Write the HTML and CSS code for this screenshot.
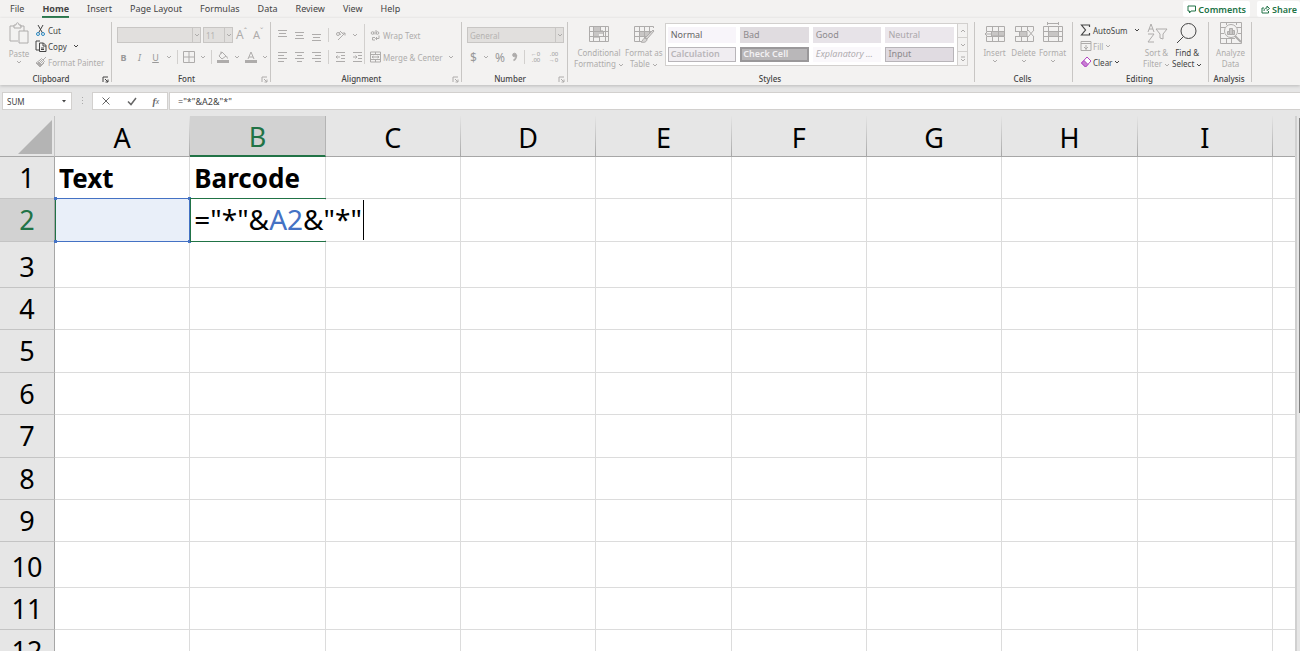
FILE: index.html
```html
<!DOCTYPE html>
<html lang="en">
<head>
    <meta charset="UTF-8">
    <meta name="viewport" content="width=device-width, initial-scale=1.0">
    <title>Barcode Workbook</title>
    <link rel="stylesheet" href="styles.css">
</head>
<body>
    <!-- Shared icons -->
    <svg class="sprite" aria-hidden="true">
        <symbol id="chev" viewBox="0 0 6 6"><path d="M1 2l2 2 2-2"/></symbol>
        <symbol id="launcher" viewBox="0 0 7 7"><path d="M1 6V1h5M3 3l3 3M6 3.500V6H3.500"/></symbol>
    </svg>

    <!-- Tabs -->
    <header class="tabs">
        <nav>
            <a href="#">File</a>
            <a href="#" class="active">Home</a>
            <a href="#">Insert</a>
            <a href="#">Page Layout</a>
            <a href="#">Formulas</a>
            <a href="#">Data</a>
            <a href="#">Review</a>
            <a href="#">View</a>
            <a href="#">Help</a>
        </nav>
        <div class="tab-actions">
            <button type="button"><svg width="9" height="9" viewBox="0 0 9 9"><path d="M1 1h7.500v5H4L2.500 8V6H1z"/></svg>Comments</button>
            <button type="button"><svg width="9" height="9" viewBox="0 0 9 9"><path d="M3 3H1v5h6.500V6M3 6c0-2 1-3 3-3V1l2.500 2.500L6 5.500V4.500"/></svg>Share</button>
        </div>
    </header>

    <!-- Ribbon -->
    <div class="ribbon">
        <section class="group clipboard">
            <div class="group-body">
                <button type="button" class="big off">
                    <svg width="22" height="23" viewBox="0 0 22 23"><path d="M6 4H2v15h8M16 9V4h-4M6 6V3h2c0-3 3-3 3 0h2v3zM11 9h9v12h-9z"/></svg>
                    <span>Paste</span>
                    <svg class="chev"><use href="#chev"/></svg>
                </button>
                <div class="stack">
                    <button type="button"><svg width="12" height="12" viewBox="0 0 12 12"><path d="M3 1l4.500 8M8 1L3.500 9"/><g stroke="#2b88c0"><circle cx="3" cy="10" r="1.500"/><circle cx="8" cy="10" r="1.500"/></g></svg>Cut</button>
                    <button type="button"><svg width="12" height="12" viewBox="0 0 12 12"><path d="M4 10H1V1h4M4.500 3h4l2.500 2.500V11.500H4.500zM8 3v3h3M6 8h3M6 9.500h3"/></svg>Copy<svg class="chev"><use href="#chev"/></svg></button>
                    <button type="button" class="off"><svg width="12" height="12" viewBox="0 0 12 12"><path d="M11 1L8 4M5 3l4 4M6.500 2.500l3 3-2 2-3-3zM5 4L1 7l4 4 4-4" /><path d="M3 7l2 2M2 8l3 3 2-2-3-3z" fill="currentColor"/></svg>Format Painter</button>
                </div>
            </div>
            <footer><h2>Clipboard</h2><svg width="7" height="7"><use href="#launcher"/></svg></footer>
        </section>

        <section class="group font off">
            <div class="group-body rows">
                <div class="row">
                    <span class="drop name"><select aria-label="Font" disabled><option></option></select><svg class="chev"><use href="#chev"/></svg></span>
                    <span class="drop size"><select aria-label="Font size" disabled><option>11</option></select><svg class="chev"><use href="#chev"/></svg></span>
                    <button type="button" class="letter grow" aria-label="Increase font size">A<sup>ˆ</sup></button>
                    <button type="button" class="letter" aria-label="Decrease font size">A<sup>ˇ</sup></button>
                </div>
                <div class="row">
                    <button type="button" class="glyph"><b>B</b></button>
                    <button type="button" class="glyph"><i>I</i></button>
                    <button type="button" class="glyph"><u>U</u></button>
                    <svg class="chev"><use href="#chev"/></svg>
                    <span class="sep"></span>
                    <button type="button" aria-label="Borders"><svg width="12" height="12" viewBox="0 0 12 12"><path d="M.5.5h11v11H.5zM6 1v10M1 6h10"/></svg></button>
                    <svg class="chev"><use href="#chev"/></svg>
                    <span class="sep"></span>
                    <button type="button" aria-label="Fill color"><svg width="12" height="12" viewBox="0 0 12 12"><path d="M5 1l4 4-4 3-3-3zM4 3V0.500M9.500 5l1 2.500"/><path d="M0 9h12v3H0z" fill="currentColor" stroke="none"/></svg></button>
                    <svg class="chev"><use href="#chev"/></svg>
                    <button type="button" aria-label="Font color"><svg width="12" height="12" viewBox="0 0 12 12"><path d="M3 8l3-7 3 7M4 6h4"/><path d="M0 9h12v3H0z" fill="currentColor" stroke="none"/></svg></button>
                    <svg class="chev"><use href="#chev"/></svg>
                </div>
            </div>
            <footer><h2>Font</h2><svg width="7" height="7"><use href="#launcher"/></svg></footer>
        </section>

        <section class="group alignment off">
            <div class="group-body split">
                <div class="rows">
                    <div class="row">
                        <button type="button" aria-label="Top align"><svg width="11" height="12" viewBox="0 0 11 12"><path d="M1 1.500h9M2 4.500h7M1 7.500h9"/></svg></button>
                        <button type="button" aria-label="Middle align"><svg width="11" height="12" viewBox="0 0 11 12"><path d="M1 3.500h9M2 6.500h7M1 9.500h9"/></svg></button>
                        <button type="button" aria-label="Bottom align"><svg width="11" height="12" viewBox="0 0 11 12"><path d="M1 5.500h9M2 8.500h7M1 11.500h9"/></svg></button>
                        <span class="sep"></span>
                        <button type="button" aria-label="Orientation"><svg width="11" height="12" viewBox="0 0 11 12"><circle cx="3" cy="5" r="1.500"/><path d="M4 3l1.500 3M5 2l3 3M3 11l7-7M7.500 4H10v2.500"/></svg></button>
                        <svg class="chev"><use href="#chev"/></svg>
                    </div>
                    <div class="row">
                        <button type="button" aria-label="Align left"><svg width="11" height="12" viewBox="0 0 11 12"><path d="M1 1.500h9M1 4.500h6M1 7.500h9M1 10.500h6"/></svg></button>
                        <button type="button" aria-label="Center"><svg width="11" height="12" viewBox="0 0 11 12"><path d="M1 1.500h9M3 4.500h5M1 7.500h9M3 10.500h5"/></svg></button>
                        <button type="button" aria-label="Align right"><svg width="11" height="12" viewBox="0 0 11 12"><path d="M1 1.500h9M4 4.500h6M1 7.500h9M4 10.500h6"/></svg></button>
                        <span class="sep"></span>
                        <button type="button" aria-label="Decrease indent"><svg width="11" height="12" viewBox="0 0 11 12"><path d="M1 1.500h9M6 4.500h4M6 7.500h4M1 10.500h9M5 6H1M2.500 4.500L1 6l1.500 1.500"/></svg></button>
                        <button type="button" aria-label="Increase indent"><svg width="11" height="12" viewBox="0 0 11 12"><path d="M1 1.500h9M6 4.500h4M6 7.500h4M1 10.500h9M1 6h4M3.500 4.500L5 6 3.500 7.500"/></svg></button>
                    </div>
                </div>
                <span class="sep tall-sep"></span>
                <div class="rows">
                    <div class="row"><button type="button" class="wide"><svg width="11" height="12" viewBox="0 0 11 12"><circle cx="2.500" cy="4" r="1.300"/><path d="M4 2.500v3M6 1v4.500M5 8.500H2.500v2.500H5M6 9.500h3v-3M7 8L5.500 9.500 7 11"/><circle cx="7.500" cy="4" r="1.300"/></svg>Wrap Text</button></div>
                    <div class="row"><button type="button" class="wide"><svg width="11" height="12" viewBox="0 0 11 12"><path d="M.5 1h10v10H.5zM.5 3.500h10M.5 8.500h10M5.500 1v2.500M5.500 8.500V11M2 6h7M3.500 5L2 6l1.500 1M7.500 5L9 6 7.500 7"/></svg>Merge &amp; Center<svg class="chev"><use href="#chev"/></svg></button></div>
                </div>
            </div>
            <footer><h2>Alignment</h2><svg width="7" height="7"><use href="#launcher"/></svg></footer>
        </section>

        <section class="group number off">
            <div class="group-body rows">
                <div class="row">
                    <span class="drop format"><select aria-label="Number format" disabled><option>General</option></select><svg class="chev"><use href="#chev"/></svg></span>
                </div>
                <div class="row">
                    <button type="button" class="sign">$</button>
                    <svg class="chev"><use href="#chev"/></svg>
                    <button type="button" class="sign">%</button>
                    <button type="button" aria-label="Comma style"><svg width="7" height="12" viewBox="0 0 7 12"><circle cx="3.500" cy="4" r="1.800" fill="currentColor"/><path d="M5.500 4c0 3-1 4.500-3 5.500" stroke-width="1.500"/></svg></button>
                    <span class="sep"></span>
                    <button type="button" class="decimals" aria-label="Increase decimal">←0<br>.00</button>
                    <button type="button" class="decimals" aria-label="Decrease decimal">.00<br>→0</button>
                </div>
            </div>
            <footer><h2>Number</h2><svg width="7" height="7"><use href="#launcher"/></svg></footer>
        </section>

        <section class="group styles">
            <div class="group-body">
                <button type="button" class="big off">
                    <svg width="22" height="22" viewBox="0 0 22 22"><path d="M5 4h7v4H5zM5 8h10v4H5zM5 12h6v4H5z" fill="#c8c6c5" stroke="none"/><path d="M1.500 4.500h19v15h-19zM1 9.500h20M1 14.500h20M5.500 4v15M12.500 4v5M15.500 9v5M11.500 14v5M17.500 4v15"/></svg>
                    <span>Conditional<br>Formatting <svg class="chev"><use href="#chev"/></svg></span>
                </button>
                <button type="button" class="big off">
                    <svg width="22" height="22" viewBox="0 0 22 22"><path d="M6 9h10v5H6z" fill="#c8c6c5" stroke="none"/><path d="M9 19.500H1.500v-15h19V6M1 9.500h18M1 14.500h12M6.500 4v15M11.500 4v13M16.500 4v7"/><path d="M21 9l-7 8-2-1 8-8zM12 16c-2 0-2 3-4 4 3 1 6 0 6-3z" fill="#d8d6d5"/></svg>
                    <span>Format as<br>Table <svg class="chev"><use href="#chev"/></svg></span>
                </button>
                <div class="gallery">
                    <div class="swatches">
                        <button type="button" class="normal">Normal</button>
                        <button type="button" class="bad">Bad</button>
                        <button type="button" class="good">Good</button>
                        <button type="button" class="neutral">Neutral</button>
                        <button type="button" class="calculation">Calculation</button>
                        <button type="button" class="check">Check Cell</button>
                        <button type="button" class="explanatory">Explanatory ...</button>
                        <button type="button" class="input">Input</button>
                    </div>
                    <div class="gallery-scroll">
                        <button type="button" aria-label="Previous styles"><svg class="chev" viewBox="0 0 6 6"><path d="M1 4l2-2 2 2"/></svg></button>
                        <button type="button" aria-label="Next styles"><svg class="chev"><use href="#chev"/></svg></button>
                        <button type="button" aria-label="More styles"><svg class="chev" viewBox="0 0 6 6"><path d="M1 1h4M1 3l2 2 2-2"/></svg></button>
                    </div>
                </div>
            </div>
            <footer><h2>Styles</h2></footer>
        </section>

        <section class="group cells off">
            <div class="group-body">
                <button type="button" class="big">
                    <svg width="22" height="22" viewBox="0 0 22 22"><path d="M7 9h14v5H7z" fill="#c8c6c5" stroke="none"/><path d="M2.500 4.500h18v5h-18zM2.500 14.500h18v5h-18zM8.500 4v5M14.500 4v5M8.500 14v5M14.500 14v5M7.500 9v5h13V9M14.500 9v5M7 12H1M3.500 9.500L1 12l2.500 2.500"/></svg>
                    <span>Insert</span>
                    <svg class="chev"><use href="#chev"/></svg>
                </button>
                <button type="button" class="big">
                    <svg width="22" height="22" viewBox="0 0 22 22"><path d="M6 9h8v5H6z" fill="#c8c6c5" stroke="none"/><path d="M2.500 9V4.500h18V8M2.500 14v5.500h18V15M8.500 4v5M14.500 4v5M8.500 14v5M14.500 14v5M2 9.500h12v5H2M6.500 9v5M15 8l6 7M21 8l-6 7"/></svg>
                    <span>Delete</span>
                    <svg class="chev"><use href="#chev"/></svg>
                </button>
                <button type="button" class="big">
                    <svg width="22" height="22" viewBox="0 0 22 22"><path d="M6 9h10v5H6z" fill="#c8c6c5" stroke="none"/><path d="M1.500 4.500h19v15h-19zM2 9.500h18M2 14.500h18M6.500 4v15M16.500 4v15M5 1.500h12M5.500 0v3M16.500 0v3"/></svg>
                    <span>Format</span>
                    <svg class="chev"><use href="#chev"/></svg>
                </button>
            </div>
            <footer><h2>Cells</h2></footer>
        </section>

        <section class="group editing">
            <div class="group-body">
                <div class="stack">
                    <button type="button" class="autosum"><svg width="12" height="12" viewBox="0 0 12 12"><path d="M9.500 3V1H1.500l4 5-4 5h8V9" stroke-width="1.200"/></svg>AutoSum<svg class="chev"><use href="#chev"/></svg></button>
                    <button type="button" class="off"><svg width="12" height="12" viewBox="0 0 12 12"><path d="M1 1.500h10v9H1zM1 3.500h10M6 5v5M4 7l2 2 2-2"/></svg>Fill<svg class="chev"><use href="#chev"/></svg></button>
                    <button type="button"><svg width="12" height="12" viewBox="0 0 12 12"><path d="M7 1l4 4-5.500 6-4-4z" fill="#fff" stroke="#b146c2"/><path d="M4 4.500L8 8.500 5.500 11l-4-4z" fill="#c77fd3" stroke="#b146c2"/></svg>Clear<svg class="chev"><use href="#chev"/></svg></button>
                </div>
                <button type="button" class="big off">
                    <svg width="22" height="22" viewBox="0 0 22 22"><path d="M2 10l3-8 3 8M3 7h4M2 12h6l-6 8h6M10 7h11l-4 5v5l-3-1v-4z"/></svg>
                    <span>Sort &amp;<br>Filter <svg class="chev"><use href="#chev"/></svg></span>
                </button>
                <button type="button" class="big">
                    <svg width="22" height="22" viewBox="0 0 22 22"><circle cx="12.500" cy="9" r="7.500"/><path d="M7.500 14.500L1 21"/></svg>
                    <span>Find &amp;<br>Select <svg class="chev"><use href="#chev"/></svg></span>
                </button>
            </div>
            <footer><h2>Editing</h2></footer>
        </section>

        <section class="group analysis off">
            <div class="group-body">
                <button type="button" class="big">
                    <svg width="22" height="22" viewBox="0 0 22 22"><path d="M.5.5h21v21H.5zM1 5.500h4M1 16.500h14M17 5.500h4M6.500 16v5M11.500 16v5M1 11.500h3M18 11.500h3M6.500 1v2M16.500 1v2"/><path d="M14 13l7 7" stroke-width="2"/><circle cx="11" cy="9" r="6.500" fill="#f3f2f1"/><path d="M7.500 9.500h2v3h-2zM9.500 6.500h3v6h-3zM12.500 8.500h2v4h-2z" fill="#c8c6c5"/></svg>
                    <span>Analyze<br>Data</span>
                </button>
            </div>
            <footer><h2>Analysis</h2></footer>
        </section>
    </div>

    <!-- Formula bar -->
    <div class="formula-bar">
        <span class="name-box"><input type="text" value="SUM" aria-label="Name box"><svg width="6" height="6" viewBox="0 0 6 6"><path d="M1 2h4L3 4.500z" fill="currentColor" stroke="none"/></svg></span>
        <span class="grip"></span>
        <div class="entry-buttons">
            <button type="button" aria-label="Cancel"><svg width="10" height="10" viewBox="0 0 10 10"><path d="M1.500 1.500l7 7M8.500 1.500l-7 7"/></svg></button>
            <button type="button" aria-label="Enter"><svg width="10" height="10" viewBox="0 0 10 10"><path d="M1 5.500l3 3 5-6.500" stroke-width="1.500"/></svg></button>
            <button type="button" aria-label="Insert function"><i>f</i><small>x</small></button>
        </div>
        <input type="text" class="formula" value='="*"&amp;A2&amp;"*"' aria-label="Formula">
    </div>

    <!-- Worksheet -->
    <main class="sheet">
        <div class="grid">
            <table>
                <colgroup>
                    <col class="row-head">
                    <col><col><col><col><col><col><col><col><col>
                    <col class="last">
                </colgroup>
                <thead>
                    <tr>
                        <td class="corner"><svg width="34" height="34" viewBox="0 0 34 34"><path d="M34 0v34H0z"/></svg></td>
                        <th>A</th><th class="selected">B</th><th>C</th><th>D</th><th>E</th><th>F</th><th>G</th><th>H</th><th>I</th><th></th>
                    </tr>
                </thead>
                <tbody>
                    <tr><th>1</th><td class="title">Text</td><td class="title">Barcode</td><td></td><td></td><td></td><td></td><td></td><td></td><td></td><td></td></tr>
                    <tr class="mid">
                        <th class="selected">2</th>
                        <td class="reference"><span class="outline"></span></td>
                        <td class="editing-cell"><div class="editor" contenteditable="true" spellcheck="false">="*"&amp;<span class="ref">A2</span>&amp;"*"</div></td>
                        <td></td><td></td><td></td><td></td><td></td><td></td><td></td><td></td>
                    </tr>
                    <tr class="tall"><th>3</th><td></td><td></td><td></td><td></td><td></td><td></td><td></td><td></td><td></td><td></td></tr>
                    <tr><th>4</th><td></td><td></td><td></td><td></td><td></td><td></td><td></td><td></td><td></td><td></td></tr>
                    <tr class="mid"><th>5</th><td></td><td></td><td></td><td></td><td></td><td></td><td></td><td></td><td></td><td></td></tr>
                    <tr><th>6</th><td></td><td></td><td></td><td></td><td></td><td></td><td></td><td></td><td></td><td></td></tr>
                    <tr class="mid"><th>7</th><td></td><td></td><td></td><td></td><td></td><td></td><td></td><td></td><td></td><td></td></tr>
                    <tr><th>8</th><td></td><td></td><td></td><td></td><td></td><td></td><td></td><td></td><td></td><td></td></tr>
                    <tr><th>9</th><td></td><td></td><td></td><td></td><td></td><td></td><td></td><td></td><td></td><td></td></tr>
                    <tr class="tall"><th>10</th><td></td><td></td><td></td><td></td><td></td><td></td><td></td><td></td><td></td><td></td></tr>
                    <tr><th>11</th><td></td><td></td><td></td><td></td><td></td><td></td><td></td><td></td><td></td><td></td></tr>
                    <tr><th>12</th><td></td><td></td><td></td><td></td><td></td><td></td><td></td><td></td><td></td><td></td></tr>
                </tbody>
            </table>
        </div>
        <div class="scrollbar"><span></span></div>
    </main>
</body>
</html>
```
FILE: styles.css
```css
/* General Styles */
* {
    box-sizing: border-box;
}

body {
    margin: 0;
    height: 100vh;
    display: flex;
    flex-direction: column;
    overflow: hidden;
    background-color: #e6e6e6;
    color: #444;
    font-family: "Noto Sans", "Open Sans", sans-serif;
    font-size: 8px;
}

button,
input,
select {
    font: inherit;
    color: inherit;
}

button {
    padding: 0;
    border: none;
    background: none;
    display: flex;
    align-items: center;
}

svg {
    flex: none;
    fill: none;
    stroke: currentColor;
}

.sprite {
    position: absolute;
    width: 0;
    height: 0;
}

.chev {
    width: 6px;
    height: 6px;
}

.off {
    color: #aeacab;
}

/* Tabs */
.tabs {
    display: flex;
    justify-content: space-between;
    height: 18px;
    background-color: #f3f2f1;
    font-size: 9px;
}

.tabs nav {
    display: flex;
    gap: 18px;
    padding-left: 10px;
}

.tabs nav a {
    color: #444;
    text-decoration: none;
    line-height: 18px;
}

.tabs nav .active {
    font-weight: bold;
    border-bottom: 2px solid #217346;
}

.tab-actions {
    display: flex;
    gap: 7px;
    padding: 1px 0;
}

.tab-actions button {
    gap: 2px;
    padding: 0 4px;
    background-color: #fff;
    border-radius: 2px;
    color: #217346;
    font-weight: 600;
}

.tab-actions button:last-child {
    padding-right: 3px;
}

/* Ribbon */
.ribbon {
    display: flex;
    background-color: #f3f2f1;
    box-shadow: 0 1px 3px #bbb;
    white-space: nowrap;
}

.group {
    display: flex;
    flex-direction: column;
    flex: none;
    position: relative;
}

.group::after {
    content: "";
    position: absolute;
    right: 0;
    top: 4px;
    bottom: 3px;
    border-right: 1px solid #c8c6c4;
}

.group-body {
    display: flex;
    height: 55px;
    padding-top: 4px;
}

.group footer {
    display: flex;
    align-items: center;
    height: 12px;
    padding-right: 3px;
}

.group h2 {
    flex: 1;
    margin: 0;
    color: #444;
    font-size: 8px;
    font-weight: 500;
    line-height: 12px;
    text-align: center;
}

.clipboard { width: 112px; }
.font { width: 159px; }
.alignment { width: 191px; }
.number { width: 106px; }
.styles { width: 407px; }
.cells { width: 98px; }
.editing { width: 136px; }
.analysis { width: 43px; }

.big {
    flex-direction: column;
    line-height: 11px;
    text-align: center;
}

.big > svg:first-child {
    margin-bottom: 3px;
}

.stack {
    display: flex;
    flex-direction: column;
}

.stack button {
    height: 16px;
    gap: 1px;
}

.rows {
    display: flex;
    flex-direction: column;
}

.row {
    display: flex;
    align-items: center;
    height: 22px;
}

.sep {
    width: 1px;
    height: 14px;
    background-color: #d2d0ce;
}

.clipboard .group-body {
    padding-left: 8px;
    gap: 5px;
}

.clipboard .stack .chev {
    margin-left: 5px;
}

/* Font */
.group-body.rows,
.group-body.split {
    padding-top: 6px;
}

.font .group-body {
    padding-left: 5px;
}

.font .row:first-child {
    gap: 2px;
}

.font .row:last-child {
    gap: 5px;
    padding-left: 1px;
}

.font .letter {
    width: 15px;
    font-size: 11px;
    align-items: flex-start;
    line-height: 14px;
}

.font .grow {
    margin-left: 1px;
    font-size: 12px;
}

.letter sup {
    font-size: 8px;
    line-height: 8px;
}

.glyph {
    width: 11px;
    justify-content: center;
    font-size: 9px;
    color: #999;
}

.drop {
    position: relative;
    height: 16px;
}

.drop select {
    display: block;
    width: 100%;
    height: 100%;
    padding: 0 2px;
    appearance: none;
    border: 1px solid #c8c6c4;
    border-radius: 0;
    background-color: #e1dfdd;
    color: #b5b3b1;
    opacity: 1;
}

.drop .chev {
    position: absolute;
    right: 1px;
    top: 5px;
}

.drop::after {
    content: "";
    position: absolute;
    right: 8px;
    top: 0;
    bottom: 0;
    border-right: 1px solid #c8c6c4;
}

.drop.name { width: 84px; }
.drop.size { width: 30px; }
.drop.format { width: 97px; }

/* Alignment */
.alignment .split {
    padding-left: 6px;
}

.alignment .split > .rows:first-child {
    width: 87px;
}

.alignment .split > .rows:first-child .row {
    gap: 6px;
}

.alignment .tall-sep {
    height: 40px;
    margin-right: 5px;
}

.wide {
    gap: 2px;
}

.wide .chev {
    margin-left: 3px;
}

/* Number */
.number .group-body {
    padding-left: 5px;
}

.number .row:last-child {
    gap: 6px;
    padding-left: 3px;
}

.sign {
    color: #999;
    font-size: 12px;
}

.decimals {
    width: 12px;
    color: #999;
    font-size: 6px;
    line-height: 6px;
    text-align: right;
}

/* Styles */
.styles .group-body {
    padding-left: 6px;
    gap: 1px;
}

.styles .big .chev,
.editing .big .chev {
    vertical-align: middle;
}

.gallery {
    display: flex;
    flex: 1;
    height: 43px;
    margin: 1px 7px 0 1px;
    border: 1px solid #d2d0ce;
    background-color: #fff;
}

.swatches {
    flex: 1;
    display: grid;
    grid-template-columns: repeat(4, 1fr);
    gap: 4px;
    padding: 3px 3px 3px 2px;
}

.swatches button {
    padding: 0 3px;
    font-size: 9px;
    line-height: 14px;
}

.normal { background-color: #f8f5fa; color: #666; }
.bad { background-color: #e0dce0; color: #8d8a8d; }
.good { background-color: #e7e3e8; color: #8d8a8d; }
.neutral { background-color: #ebe7ec; color: #aaa6aa; }

.calculation {
    background-color: #f0edf1;
    outline: 1px solid #b8b5b9;
    outline-offset: -1px;
    color: #b8b5b9;
    font-weight: 600;
}

.check {
    background-color: #b9b7b9;
    outline: 2px solid #9a989a;
    outline-offset: -2px;
    color: #f2f0f2;
    font-weight: 600;
}

.explanatory {
    background-color: #faf8fb;
    color: #b0adb0;
    font-style: italic;
}

.input {
    background-color: #e0dbe1;
    outline: 1px solid #b8b5b9;
    outline-offset: -1px;
    color: #8d8a8d;
}

.gallery-scroll {
    display: flex;
    flex-direction: column;
    width: 10px;
    border-left: 1px solid #d2d0ce;
    background-color: #f3f2f1;
    color: #aeacab;
}

.gallery-scroll button {
    flex: 1;
    justify-content: center;
}

.gallery-scroll button + button {
    border-top: 1px solid #d2d0ce;
}

/* Cells, Editing, Analysis */
.cells .group-body {
    padding-left: 7px;
    gap: 4px;
}

.cells .big {
    width: 25px;
}

.editing .group-body {
    padding-left: 7px;
    gap: 2px;
}

.editing .stack {
    width: 61px;
}

.editing .stack .chev {
    margin-left: 1px;
}

.editing .autosum .chev {
    margin-left: 5px;
}

.analysis .group-body {
    justify-content: center;
}

/* Formula bar */
.formula-bar {
    display: flex;
    align-items: stretch;
    height: 18px;
    margin: 7px 0 6px;
    padding-left: 2px;
}

.formula-bar input {
    border: none;
    padding: 0 4px;
    min-width: 0;
    background-color: #fff;
}

.name-box {
    display: flex;
    align-items: center;
    width: 70px;
    padding-right: 4px;
    border: 1px solid #d2d0ce;
    background-color: #fff;
}

.name-box input {
    flex: 1;
}

.grip {
    width: 20px;
    margin: 5px 0;
    background: linear-gradient(#aaa, #aaa) center / 1px 100% no-repeat;
    -webkit-mask: repeating-linear-gradient(#000 0 1px, transparent 1px 3px);
    mask: repeating-linear-gradient(#000 0 1px, transparent 1px 3px);
}

.entry-buttons {
    display: flex;
    width: 76px;
    justify-content: space-around;
    border: 1px solid #d2d0ce;
    background-color: #fff;
    color: #666;
}

.entry-buttons i {
    font-family: "Liberation Serif", serif;
    font-size: 10px;
    font-weight: bold;
}

.entry-buttons small {
    font-size: 7px;
    font-style: italic;
}

.formula-bar .formula {
    flex: 1;
    margin-left: 1px;
    padding-left: 8px;
    border: 1px solid #d2d0ce;
    border-right: none;
    font-size: 9px;
}

/* Worksheet */
.sheet {
    flex: 1;
    display: flex;
    min-height: 0;
}

.grid {
    flex: 1;
    overflow: hidden;
    border-right: 2px solid #d0d0d0;
}

table {
    width: 100%;
    table-layout: fixed;
    border-collapse: separate;
    border-spacing: 0;
    background-color: #fff;
    color: #000;
    font-size: 27px;
    line-height: 36px;
}

.row-head {
    width: 55px;
}

.last {
    width: 22px;
}

th {
    font-weight: normal;
}

th,
td {
    height: 42px;
    padding: 0;
    border-right: 1px solid #dcdcdc;
    border-bottom: 1px solid #dcdcdc;
}

.mid th,
.mid td {
    height: 43px;
}

.tall th,
.tall td {
    height: 46px;
}

.tall th {
    padding-top: 4px;
}

th:last-child,
td:last-child {
    border-right: none;
}

thead th,
thead .corner {
    height: 41px;
    border-bottom: 1px solid #a6a6a6;
    border-right-color: #c4c4c4;
    background-color: #e6e6e6;
}

thead th {
    padding-top: 3px;
    border-right: 1px solid;
    border-image: linear-gradient(#e6e6e6, #a6a6a6) 1;
}

thead th.selected {
    border-image: none;
    border-right-color: #b4b4b4;
    border-bottom: 2px solid #217346;
}

.corner svg {
    display: block;
    margin: 4px 2px 2px auto;
    fill: #b4b4b4;
    stroke: none;
}

tbody th {
    border-right-color: #a6a6a6;
    border-bottom-color: #c4c4c4;
    background-color: #e6e6e6;
}

th.selected {
    background-color: #d2d2d2;
    color: #217346;
}

.title {
    padding-left: 4px;
    font-size: 26px;
    font-weight: bold;
}

/* Cell used by the formula, with its corner handles */
.reference {
    position: relative;
    background-color: #e9eff9;
}

.outline {
    position: absolute;
    inset: -1px -1px -1px 0;
    border: 1px solid #4472c4;
    border-left-color: #217346;
}

.outline::before,
.outline::after {
    content: "";
    position: absolute;
    top: -2px;
    bottom: -2px;
    width: 3px;
    border: solid #4472c4;
    border-width: 3px 0;
}

.outline::before {
    left: -2px;
}

.outline::after {
    right: -2px;
}

.editing-cell {
    position: relative;
}

.editing-cell::before {
    content: "";
    position: absolute;
    inset: -1px -1px -1px 0;
    border: 1px solid #217346;
    border-right: none;
}

.editor {
    position: absolute;
    left: 1px;
    top: 1px;
    bottom: 1px;
    padding: 0 1px 0 3px;
    border-right: 1px solid #000;
    background-color: #fff;
    font-size: 28px;
    line-height: 38px;
    white-space: nowrap;
    outline: none;
}

.ref {
    color: #4472c4;
}

/* Scrollbar */
.scrollbar {
    width: 3px;
    padding: 2px 0 6px 2px;
    background-color: #e6e6e6;
}

.scrollbar span {
    display: block;
    height: 56%;
    background-color: #808080;
}
```
